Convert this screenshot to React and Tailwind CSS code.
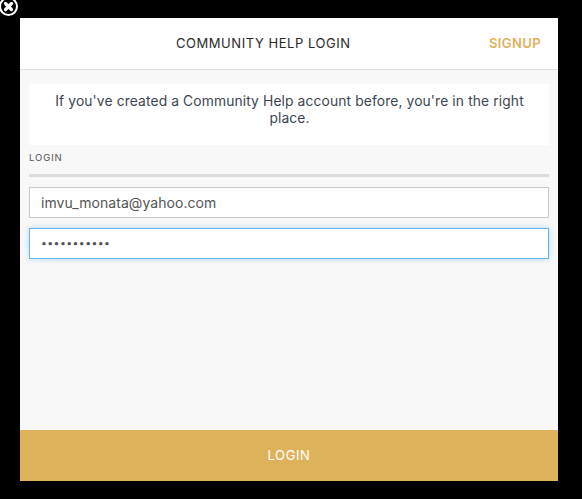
export default function App() {
  const font = { fontFamily: "Inter, 'Liberation Sans', sans-serif" };
  return (
    <div className="relative w-[582px] h-[499px] bg-black overflow-hidden" style={font}>
      <div className="absolute left-[-1px] top-[-3px] w-[19px] h-[19px] rounded-full bg-black border-[2.5px] border-white flex items-center justify-center">
        <svg width="11" height="11" viewBox="0 0 11 11">
          <path d="M2.5 2.5 L8.5 8.5 M8.5 2.5 L2.5 8.5" stroke="#fff" strokeWidth="3.2" strokeLinecap="round" />
        </svg>
      </div>
      <div className="pt-[18px] pl-5 w-[558px]">
        <div className="w-[538px] h-[463px] bg-[#f8f8f8] flex flex-col">
          <div className="h-[52px] shrink-0 bg-white border-b border-[#e0e0e0] flex items-center justify-between pl-[156px] pr-[17px]">
            <span className="text-[13px] text-[#2b2b2b] tracking-[0.55px] whitespace-nowrap">COMMUNITY HELP LOGIN</span>
            <span className="text-[13px] font-semibold text-[#deb25b] tracking-[0.4px]">SIGNUP</span>
          </div>
          <div className="flex-1 px-[9px] pt-[14px] flex flex-col">
            <div className="h-[61px] bg-white pl-[21px] pr-5 pt-[9px] text-center text-[13.8px] leading-[17px] tracking-[0.13px] text-[#3c4650]">
              If you've created a Community Help account before, you're in the right place.
            </div>
            <div className="h-[29px] pb-[2px] flex items-center text-[9.5px] tracking-[0.9px] text-[#555]">LOGIN</div>
            <div className="h-[3px] bg-[#dcdcdc]" />
            <div className="mt-[10px] h-[31px] bg-white border border-[#c8c8c8] pl-[11px] flex items-center text-[14px] tracking-[0.05px] text-[#555]">imvu_monata@yahoo.com</div>
            <div className="mt-[10px] h-[31px] bg-white border border-[#64b4f0] shadow-[0_0_6px_rgba(100,180,240,0.45)] pl-[11px] flex items-center text-[10.5px] text-[#555] tracking-[0.4px]">•••••••••••</div>
          </div>
          <div className="h-[51px] shrink-0 bg-[#deb25b] flex items-center justify-center text-[13px] text-white tracking-[0.65px]">LOGIN</div>
        </div>
      </div>
    </div>
  );
}
